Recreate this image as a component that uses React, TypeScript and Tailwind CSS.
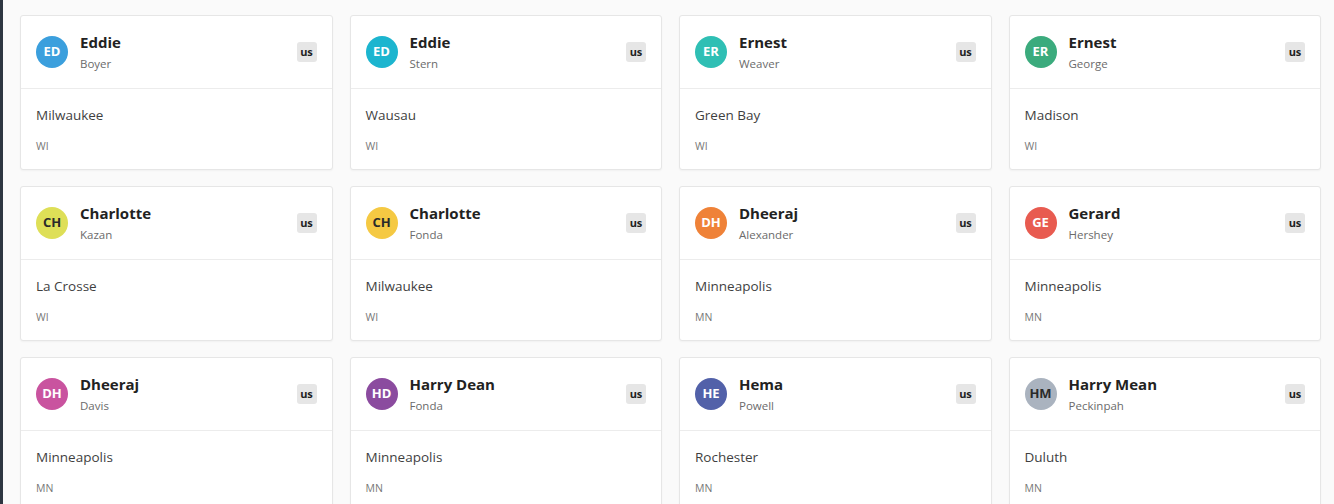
import React from "react";

type Person = {
  initials: string;
  first: string;
  last: string;
  city: string;
  state: string;
  color: string;
  dark?: boolean;
};

const people: Person[] = [
  { initials: "ED", first: "Eddie", last: "Boyer", city: "Milwaukee", state: "WI", color: "bg-[#3b9fdd]" },
  { initials: "ED", first: "Eddie", last: "Stern", city: "Wausau", state: "WI", color: "bg-[#1cb5cf]" },
  { initials: "ER", first: "Ernest", last: "Weaver", city: "Green Bay", state: "WI", color: "bg-[#2fbfb4]" },
  { initials: "ER", first: "Ernest", last: "George", city: "Madison", state: "WI", color: "bg-[#3bab7d]" },
  { initials: "CH", first: "Charlotte", last: "Kazan", city: "La Crosse", state: "WI", color: "bg-[#dedf57]", dark: true },
  { initials: "CH", first: "Charlotte", last: "Fonda", city: "Milwaukee", state: "WI", color: "bg-[#f5c943]", dark: true },
  { initials: "DH", first: "Dheeraj", last: "Alexander", city: "Minneapolis", state: "MN", color: "bg-[#ef8238]" },
  { initials: "GE", first: "Gerard", last: "Hershey", city: "Minneapolis", state: "MN", color: "bg-[#e85b50]" },
  { initials: "DH", first: "Dheeraj", last: "Davis", city: "Minneapolis", state: "MN", color: "bg-[#c9539f]" },
  { initials: "HD", first: "Harry Dean", last: "Fonda", city: "Minneapolis", state: "MN", color: "bg-[#8b4b9f]" },
  { initials: "HE", first: "Hema", last: "Powell", city: "Rochester", state: "MN", color: "bg-[#5261a9]" },
  { initials: "HM", first: "Harry Mean", last: "Peckinpah", city: "Duluth", state: "MN", color: "bg-[#aab3bf]", dark: true },
];

const ContactCard = ({ p }: { p: Person }) => (
  <div className="bg-white border border-[#e6e6e6] rounded-[3px] shadow-[0_1px_2px_rgba(0,0,0,0.04)] h-[155px] flex flex-col">
    {/* Header */}
    <div className="h-[73px] flex items-center px-[15px] border-b border-[#ececec]">
      <div
        className={`w-8 h-8 rounded-full flex items-center justify-center text-[13px] font-bold ${p.color} ${
          p.dark ? "text-[#2a2a2a]" : "text-white"
        }`}
      >
        {p.initials}
      </div>
      <div className="ml-3 flex-1">
        <p className="text-[15px] leading-5 font-bold text-[#222]">{p.first}</p>
        <p className="text-[11.5px] leading-4 mt-[4px] text-[#6b6b6b]">{p.last}</p>
      </div>
      <span className="w-5 h-5 rounded-[3px] bg-[#e6e6e6] flex items-center justify-center text-[11px] font-bold text-[#222]">
        us
      </span>
    </div>

    {/* Body */}
    <div className="px-[15px] pt-4">
      <p className="text-[13.5px] leading-5 text-[#3f3f3f]">{p.city}</p>
      <p className="text-[10.5px] leading-4 mt-[13px] text-[#777]">{p.state}</p>
    </div>
  </div>
);

export default function App() {
  return (
    <div className="flex w-[1334px] h-[504px] overflow-hidden bg-[#fafafa] font-['Open_Sans',sans-serif]">
      <div className="w-[3px] shrink-0 bg-[#2e3641]" />
      <div className="flex-1 pl-[17px] pr-[13px] pt-[15px]">
        <div className="grid grid-cols-4 gap-x-[17px] gap-y-[16px]">
          {people.map((p, i) => (
            <ContactCard key={i} p={p} />
          ))}
        </div>
      </div>
    </div>
  );
}
